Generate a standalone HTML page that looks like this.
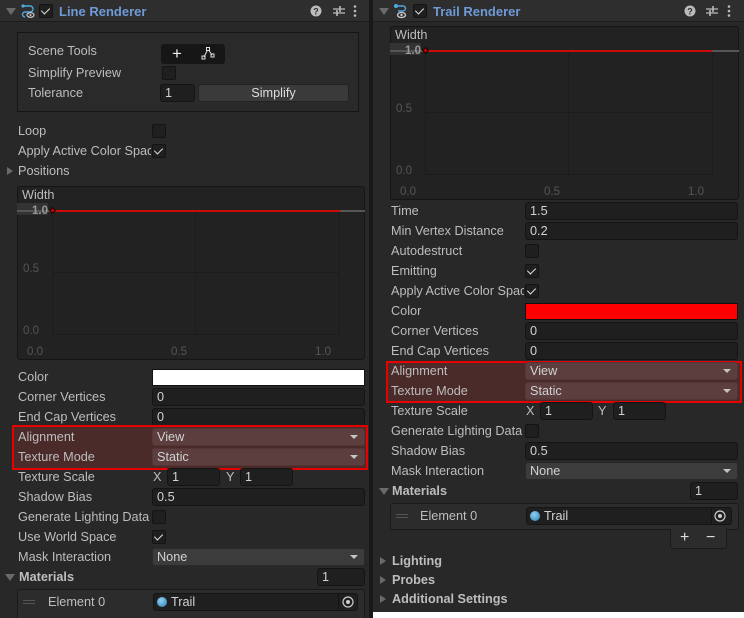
<!DOCTYPE html>
<html><head><style>
*{margin:0;padding:0;box-sizing:border-box}
html,body{width:744px;height:618px;overflow:hidden}
body{background:#fff;position:relative;font-family:"Liberation Sans",sans-serif;font-size:12.7px;color:#bdbdbd}
.p{position:absolute;background:#282828}
.a{position:absolute;white-space:nowrap}
.hd{position:absolute;top:0;height:22px;background:#2e2e2e;border-bottom:1px solid #1c1c1c}
.lb{position:absolute;white-space:nowrap;line-height:14px}
.f{position:absolute;height:18px;background:#1f1f1f;border:1px solid #141414;border-radius:3px;line-height:16px;padding-left:4px;color:#d2d2d2}
.dd{position:absolute;height:18px;background:#3c3c3c;border:1px solid #2a2a2a;border-radius:3px;line-height:16px;padding-left:4px;color:#d2d2d2}
.dd:after{content:"";position:absolute;right:6px;top:6px;border-left:4px solid transparent;border-right:4px solid transparent;border-top:4px solid #c4c4c4}
.rd{background:#5c3e3e;border-color:#553636}
.cb{position:absolute;width:14px;height:14px;background:#1f1f1f;border:1px solid #141414;border-radius:2px}
.cb.on:after{content:"";position:absolute;left:3px;top:1px;width:4px;height:7px;border:solid #e0e0e0;border-width:0 1.5px 1.5px 0;transform:rotate(45deg)}
.tri{position:absolute;width:0;height:0;border-top:4px solid transparent;border-bottom:4px solid transparent;border-left:6px solid #6a6a6a}
.trd{position:absolute;width:0;height:0;border-left:5px solid transparent;border-right:5px solid transparent;border-top:7px solid #6a6a6a}
.red{position:absolute;border:2px solid #e60000;background:#4b2a2a}
.bold{font-weight:bold}
.ttl{color:#6f9ad8;font-weight:bold;font-size:13px}
.cv{position:absolute;background:#222;border:1px solid #151515;border-radius:3px}
.gl{color:#555;font-size:11.5px}
</style></head><body>

<!-- LEFT PANEL -->
<div class="p" style="left:0;top:0;width:369px;height:618px"></div>
<div class="p" style="left:369px;top:0;width:4px;height:618px;background:#191919"></div>
<div class="hd" style="left:0;width:369px"></div>
<div class="trd" style="left:6px;top:8px"></div>
<svg class="a" style="left:20px;top:4px" width="16" height="14" viewBox="0 0 16 14"><circle cx="3" cy="2" r="1.6" fill="#4fa8e0"/><path d="M4 2H10a3 3 0 0 1 0 6H5a2.5 2.5 0 0 0 0 5" stroke="#4fa8e0" stroke-width="1.4" fill="none"/><ellipse cx="10.5" cy="11" rx="3.5" ry="2.3" fill="none" stroke="#ccc" stroke-width="1.2"/><circle cx="10.5" cy="11" r="1" fill="#ccc"/></svg>
<div class="cb on" style="left:39px;top:4px"></div>
<div class="a ttl" style="left:59px;top:4px">Line Renderer</div>
<svg class="a" style="left:310px;top:5px" width="12" height="12"><circle cx="6" cy="6" r="5.5" fill="#bbb"/><text x="6" y="9.5" font-size="9" font-weight="bold" text-anchor="middle" fill="#2e2e2e" font-family="Liberation Sans">?</text></svg>
<svg class="a" style="left:332px;top:5px" width="14" height="12"><path d="M1 4H13M1 8H13" stroke="#bbb" stroke-width="1.2"/><path d="M8 1V7M5 5V11" stroke="#bbb" stroke-width="1.6"/></svg>
<svg class="a" style="left:353px;top:4px" width="4" height="14"><circle cx="2" cy="2.5" r="1.3" fill="#bbb"/><circle cx="2" cy="7" r="1.3" fill="#bbb"/><circle cx="2" cy="11.5" r="1.3" fill="#bbb"/></svg>

<div class="a" style="left:17px;top:32px;width:342px;height:80px;border:1px solid #151515;background:#2a2a2a"></div>
<div class="lb" style="left:28px;top:44px">Scene Tools</div>
<div class="a" style="left:161px;top:44px;width:64px;height:20px;background:#161616;border-radius:3px"></div>
<div class="a" style="left:172px;top:44px;color:#eee;font-size:17px;line-height:19px">+</div>
<svg class="a" style="left:201px;top:46px" width="16" height="14"><path d="M3 11L7 3L11 9" stroke="#ddd" fill="none"/><rect x="1" y="10" width="3" height="3" fill="none" stroke="#ddd"/><rect x="5.5" y="1.5" width="3" height="3" fill="#161616" stroke="#ddd"/><rect x="10" y="8" width="3" height="3" fill="none" stroke="#ddd"/></svg>
<div class="lb" style="left:28px;top:66px">Simplify Preview</div>
<div class="cb" style="left:162px;top:66px"></div>
<div class="lb" style="left:28px;top:86px">Tolerance</div>
<div class="f" style="left:160px;top:84px;width:35px">1</div>
<div class="a" style="left:198px;top:84px;width:151px;height:18px;background:#3a3a3a;border:1px solid #232323;border-radius:3px;text-align:center;line-height:16px;color:#ddd">Simplify</div>

<div class="lb" style="left:18px;top:124px">Loop</div>
<div class="cb" style="left:152px;top:124px"></div>
<div class="lb" style="left:18px;top:144px;width:133px;overflow:hidden">Apply Active Color Space</div>
<div class="cb on" style="left:152px;top:144px"></div>
<div class="tri" style="left:7px;top:167px"></div>
<div class="lb" style="left:18px;top:164px">Positions</div>

<div class="cv" style="left:17px;top:186px;width:348px;height:174px"></div>
<div class="lb" style="left:22px;top:188px">Width</div>
<div class="a" style="left:52px;top:211px;width:288px;height:124px;border:1px solid #1c1c1c"></div>
<div class="a" style="left:195px;top:211px;width:1px;height:124px;background:#1c1c1c"></div>
<div class="a" style="left:52px;top:272px;width:288px;height:1px;background:#1c1c1c"></div>
<div class="a" style="left:17px;top:203px;width:31px;height:12px;background:#333"></div>
<div class="a" style="left:17px;top:210px;width:348px;height:2px;background:#555"></div>
<div class="a" style="left:52px;top:210px;width:288px;height:2px;background:#cc0a0a"></div>
<div class="a" style="left:50px;top:208px;width:5px;height:5px;background:#c00;border:1px solid #000;transform:rotate(45deg)"></div>
<div class="a gl" style="left:32px;top:205px;color:#999;font-weight:bold">1.0</div>
<div class="a gl" style="left:23px;top:263px">0.5</div>
<div class="a gl" style="left:23px;top:325px">0.0</div>
<div class="a gl" style="left:27px;top:346px">0.0</div>
<div class="a gl" style="left:171px;top:346px">0.5</div>
<div class="a gl" style="left:315px;top:346px">1.0</div>

<div class="lb" style="left:18px;top:370px">Color</div>
<div class="a" style="left:152px;top:369px;width:213px;height:17px;background:#fff;border:1px solid #111"></div>
<div class="lb" style="left:18px;top:390px">Corner Vertices</div>
<div class="f" style="left:152px;top:388px;width:213px">0</div>
<div class="lb" style="left:18px;top:410px">End Cap Vertices</div>
<div class="f" style="left:152px;top:408px;width:213px">0</div>
<div class="red" style="left:12px;top:425px;width:356px;height:45px"></div>
<div class="lb" style="left:18px;top:430px">Alignment</div>
<div class="dd rd" style="left:152px;top:428px;width:213px">View</div>
<div class="lb" style="left:18px;top:450px">Texture Mode</div>
<div class="dd rd" style="left:152px;top:448px;width:213px">Static</div>
<div class="lb" style="left:18px;top:470px">Texture Scale</div>
<div class="lb" style="left:153px;top:470px">X</div>
<div class="f" style="left:167px;top:468px;width:53px">1</div>
<div class="lb" style="left:226px;top:470px">Y</div>
<div class="f" style="left:240px;top:468px;width:53px">1</div>
<div class="lb" style="left:18px;top:490px">Shadow Bias</div>
<div class="f" style="left:152px;top:488px;width:213px">0.5</div>
<div class="lb" style="left:18px;top:510px;width:133px;overflow:hidden">Generate Lighting Data</div>
<div class="cb" style="left:152px;top:510px"></div>
<div class="lb" style="left:18px;top:530px">Use World Space</div>
<div class="cb on" style="left:152px;top:530px"></div>
<div class="lb" style="left:18px;top:550px">Mask Interaction</div>
<div class="dd" style="left:152px;top:548px;width:213px">None</div>
<div class="trd" style="left:5px;top:574px"></div>
<div class="lb bold" style="left:19px;top:570px">Materials</div>
<div class="f" style="left:317px;top:568px;width:48px">1</div>
<div class="a" style="left:17px;top:589px;width:348px;height:29px;background:#2c2c2c;border:1px solid #1a1a1a;border-bottom:none;border-radius:3px 3px 0 0"></div>
<div class="a" style="left:23px;top:600px;width:12px;height:4px;border-top:1px solid #555;border-bottom:1px solid #555"></div>
<div class="lb" style="left:48px;top:595px">Element 0</div>
<div class="f" style="left:153px;top:593px;width:205px;padding-left:17px">Trail</div>
<div class="a" style="left:157px;top:597px;width:10px;height:10px;border-radius:50%;background:radial-gradient(circle at 40% 35%,#8fd0f5,#2a7fb0)"></div>
<div class="a" style="left:338px;top:594px;width:1px;height:16px;background:#141414"></div>
<svg class="a" style="left:342px;top:596px" width="12" height="12"><circle cx="6" cy="6" r="5" fill="none" stroke="#ccc" stroke-width="1.2"/><circle cx="6" cy="6" r="2" fill="#ccc"/></svg>

<!-- RIGHT PANEL -->
<div class="p" style="left:373px;top:0;width:371px;height:612px"></div>
<div class="hd" style="left:373px;width:371px"></div>
<div class="trd" style="left:379px;top:8px"></div>
<svg class="a" style="left:393px;top:3px" width="16" height="16" viewBox="0 0 16 16"><circle cx="3" cy="3" r="2" fill="#4fa8e0"/><path d="M5 3H10a2.5 2.5 0 0 1 0 5H5" stroke="#4fa8e0" stroke-width="1.4" fill="none"/><ellipse cx="8.5" cy="12" rx="4" ry="2.5" fill="none" stroke="#ccc" stroke-width="1.3"/><circle cx="8.5" cy="12" r="1.2" fill="#ccc"/></svg>
<div class="cb on" style="left:413px;top:4px"></div>
<div class="a ttl" style="left:433px;top:4px">Trail Renderer</div>
<svg class="a" style="left:684px;top:5px" width="12" height="12"><circle cx="6" cy="6" r="5.5" fill="#bbb"/><text x="6" y="9.5" font-size="9" font-weight="bold" text-anchor="middle" fill="#2e2e2e" font-family="Liberation Sans">?</text></svg>
<svg class="a" style="left:705px;top:5px" width="14" height="12"><path d="M1 4H13M1 8H13" stroke="#bbb" stroke-width="1.2"/><path d="M8 1V7M5 5V11" stroke="#bbb" stroke-width="1.6"/></svg>
<svg class="a" style="left:727px;top:4px" width="4" height="14"><circle cx="2" cy="2.5" r="1.3" fill="#bbb"/><circle cx="2" cy="7" r="1.3" fill="#bbb"/><circle cx="2" cy="11.5" r="1.3" fill="#bbb"/></svg>

<div class="cv" style="left:390px;top:26px;width:349px;height:174px"></div>
<div class="lb" style="left:395px;top:28px">Width</div>
<div class="a" style="left:425px;top:50px;width:288px;height:125px;border:1px solid #1c1c1c"></div>
<div class="a" style="left:568px;top:50px;width:1px;height:125px;background:#1c1c1c"></div>
<div class="a" style="left:425px;top:112px;width:288px;height:1px;background:#1c1c1c"></div>
<div class="a" style="left:390px;top:43px;width:31px;height:12px;background:#333"></div>
<div class="a" style="left:390px;top:50px;width:349px;height:2px;background:#555"></div>
<div class="a" style="left:425px;top:50px;width:287px;height:2px;background:#cc0a0a"></div>
<div class="a" style="left:423px;top:48px;width:5px;height:5px;background:#c00;border:1px solid #000;transform:rotate(45deg)"></div>
<div class="a gl" style="left:405px;top:45px;color:#999;font-weight:bold">1.0</div>
<div class="a gl" style="left:396px;top:103px">0.5</div>
<div class="a gl" style="left:396px;top:165px">0.0</div>
<div class="a gl" style="left:400px;top:186px">0.0</div>
<div class="a gl" style="left:544px;top:186px">0.5</div>
<div class="a gl" style="left:688px;top:186px">1.0</div>

<div class="lb" style="left:391px;top:204px">Time</div>
<div class="f" style="left:525px;top:202px;width:213px">1.5</div>
<div class="lb" style="left:391px;top:224px">Min Vertex Distance</div>
<div class="f" style="left:525px;top:222px;width:213px">0.2</div>
<div class="lb" style="left:391px;top:244px">Autodestruct</div>
<div class="cb" style="left:525px;top:244px"></div>
<div class="lb" style="left:391px;top:264px">Emitting</div>
<div class="cb on" style="left:525px;top:264px"></div>
<div class="lb" style="left:391px;top:284px;width:133px;overflow:hidden">Apply Active Color Space</div>
<div class="cb on" style="left:525px;top:284px"></div>
<div class="lb" style="left:391px;top:304px">Color</div>
<div class="a" style="left:525px;top:303px;width:213px;height:17px;background:#f00;border:1px solid #111"></div>
<div class="lb" style="left:391px;top:324px">Corner Vertices</div>
<div class="f" style="left:525px;top:322px;width:213px">0</div>
<div class="lb" style="left:391px;top:344px">End Cap Vertices</div>
<div class="f" style="left:525px;top:342px;width:213px">0</div>
<div class="red" style="left:386px;top:361px;width:356px;height:42px"></div>
<div class="lb" style="left:391px;top:364px">Alignment</div>
<div class="dd rd" style="left:525px;top:362px;width:213px">View</div>
<div class="lb" style="left:391px;top:384px">Texture Mode</div>
<div class="dd rd" style="left:525px;top:382px;width:213px">Static</div>
<div class="lb" style="left:391px;top:404px">Texture Scale</div>
<div class="lb" style="left:526px;top:404px">X</div>
<div class="f" style="left:540px;top:402px;width:53px">1</div>
<div class="lb" style="left:598px;top:404px">Y</div>
<div class="f" style="left:613px;top:402px;width:53px">1</div>
<div class="lb" style="left:391px;top:424px;width:133px;overflow:hidden">Generate Lighting Data</div>
<div class="cb" style="left:525px;top:424px"></div>
<div class="lb" style="left:391px;top:444px">Shadow Bias</div>
<div class="f" style="left:525px;top:442px;width:213px">0.5</div>
<div class="lb" style="left:391px;top:464px">Mask Interaction</div>
<div class="dd" style="left:525px;top:462px;width:213px">None</div>
<div class="trd" style="left:379px;top:488px"></div>
<div class="lb bold" style="left:392px;top:484px">Materials</div>
<div class="f" style="left:690px;top:482px;width:48px">1</div>
<div class="a" style="left:390px;top:503px;width:349px;height:27px;background:#2c2c2c;border:1px solid #1a1a1a;border-radius:3px"></div>
<div class="a" style="left:396px;top:514px;width:12px;height:4px;border-top:1px solid #555;border-bottom:1px solid #555"></div>
<div class="lb" style="left:420px;top:509px">Element 0</div>
<div class="f" style="left:526px;top:507px;width:206px;padding-left:17px">Trail</div>
<div class="a" style="left:530px;top:511px;width:10px;height:10px;border-radius:50%;background:radial-gradient(circle at 40% 35%,#8fd0f5,#2a7fb0)"></div>
<div class="a" style="left:711px;top:508px;width:1px;height:16px;background:#141414"></div>
<svg class="a" style="left:714px;top:510px" width="12" height="12"><circle cx="6" cy="6" r="5" fill="none" stroke="#ccc" stroke-width="1.2"/><circle cx="6" cy="6" r="2" fill="#ccc"/></svg>
<div class="a" style="left:670px;top:529px;width:57px;height:20px;background:#2c2c2c;border:1px solid #1a1a1a;border-top:none;border-radius:0 0 3px 3px"></div>
<div class="a" style="left:680px;top:529px;font-size:16px;color:#ddd;line-height:18px">+</div>
<div class="a" style="left:706px;top:529px;font-size:16px;color:#ddd;line-height:18px">−</div>
<div class="tri" style="left:380px;top:557px"></div>
<div class="lb bold" style="left:392px;top:554px">Lighting</div>
<div class="tri" style="left:380px;top:576px"></div>
<div class="lb bold" style="left:392px;top:573px">Probes</div>
<div class="tri" style="left:380px;top:595px"></div>
<div class="lb bold" style="left:392px;top:592px">Additional Settings</div>
</body></html>
